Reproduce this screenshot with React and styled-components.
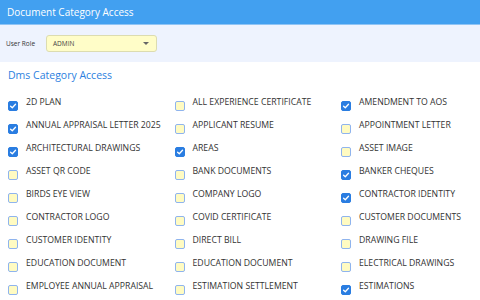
import React, { useState } from 'react';
import styled, { createGlobalStyle } from 'styled-components';

const GlobalStyle = createGlobalStyle`
  body {
    margin: 0;
    background: #ffffff;
    font-family: 'Open Sans', 'Liberation Sans', sans-serif;
  }
`;

const categories = [
  ['2D PLAN', true],
  ['ALL EXPERIENCE CERTIFICATE', false],
  ['AMENDMENT TO AOS', true],
  ['ANNUAL APPRAISAL LETTER 2025', true],
  ['APPLICANT RESUME', false],
  ['APPOINTMENT LETTER', false],
  ['ARCHITECTURAL DRAWINGS', true],
  ['AREAS', true],
  ['ASSET IMAGE', false],
  ['ASSET QR CODE', false],
  ['BANK DOCUMENTS', false],
  ['BANKER CHEQUES', true],
  ['BIRDS EYE VIEW', false],
  ['COMPANY LOGO', false],
  ['CONTRACTOR IDENTITY', true],
  ['CONTRACTOR LOGO', false],
  ['COVID CERTIFICATE', false],
  ['CUSTOMER DOCUMENTS', false],
  ['CUSTOMER IDENTITY', false],
  ['DIRECT BILL', false],
  ['DRAWING FILE', false],
  ['EDUCATION DOCUMENT', false],
  ['EDUCATION DOCUMENT', false],
  ['ELECTRICAL DRAWINGS', false],
  ['EMPLOYEE ANNUAL APPRAISAL', false],
  ['ESTIMATION SETTLEMENT', false],
  ['ESTIMATIONS', true],
];

const App = () => {
  const [checked, setChecked] = useState(categories.map((c) => c[1]));

  const toggle = (i) => {
    setChecked((prev) => prev.map((v, j) => (j === i ? !v : v)));
  };

  return (
    <Page>
      <GlobalStyle />
      <Header>Document Category Access</Header>
      <FilterBar>
        <FilterLabel>User Role</FilterLabel>
        <SelectBox>
          <span>ADMIN</span>
          <Caret />
        </SelectBox>
      </FilterBar>
      <Section>
        <SectionTitle>Dms Category Access</SectionTitle>
        <Grid>
          {categories.map(([name], i) => (
            <Item key={i} onClick={() => toggle(i)}>
              <Box $on={checked[i]}>
                {checked[i] && (
                  <svg width="8" height="8" viewBox="0 0 8 8">
                    <path d="M1.6 4.2 L3.3 5.8 L6.5 2.3" fill="none" stroke="#fff" strokeWidth="1.3" strokeLinecap="round" strokeLinejoin="round" />
                  </svg>
                )}
              </Box>
              <ItemText>{name}</ItemText>
            </Item>
          ))}
        </Grid>
      </Section>
    </Page>
  );
};

const Page = styled.div`
  width: 480px;
  height: 300px;
  overflow: hidden;
`;

const Header = styled.div`
  height: 24px;
  background: #42a0f0;
  border-bottom: 1px solid #8fc4f5;
  color: #ffffff;
  font-size: 10px;
  font-weight: 500;
  display: flex;
  align-items: center;
  padding-left: 7px;
`;

const FilterBar = styled.div`
  height: 37px;
  background: #eef3fe;
  display: flex;
  align-items: center;
  padding-left: 6px;
  gap: 6px;
`;

const FilterLabel = styled.span`
  font-size: 6.5px;
  color: #333;
  width: 34px;
  white-space: nowrap;
`;

const SelectBox = styled.div`
  width: 111px;
  height: 17px;
  box-sizing: border-box;
  background: #fffdc8;
  border: 1px solid #dcdcb0;
  border-radius: 3px;
  display: flex;
  align-items: center;
  justify-content: space-between;
  padding: 0 7px 0 6px;
  font-size: 6.5px;
  color: #444;
`;

const Caret = styled.span`
  width: 0;
  height: 0;
  border-left: 3px solid transparent;
  border-right: 3px solid transparent;
  border-top: 3px solid #666;
`;

const Section = styled.div`
  padding: 6px 8px 0 8px;
`;

const SectionTitle = styled.div`
  color: #2c7fe0;
  font-size: 10.5px;
  margin-bottom: 15px;
`;

const Grid = styled.div`
  display: grid;
  grid-template-columns: repeat(3, 166.5px);
  row-gap: 9px;
`;

const Item = styled.label`
  display: flex;
  align-items: flex-start;
  gap: 8px;
  height: 14px;
  cursor: pointer;
`;

const Box = styled.span`
  width: 10px;
  height: 10px;
  box-sizing: border-box;
  margin-top: 4px;
  border-radius: 2px;
  flex-shrink: 0;
  display: flex;
  align-items: center;
  justify-content: center;
  background: ${(p) => (p.$on ? '#2a7de1' : '#fffbc2')};
  border: 1px solid ${(p) => (p.$on ? '#2a7de1' : '#8fb4ee')};
`;

const ItemText = styled.span`
  font-size: 8.7px;
  color: #333;
  line-height: 10px;
  white-space: nowrap;
`;

export default App;
